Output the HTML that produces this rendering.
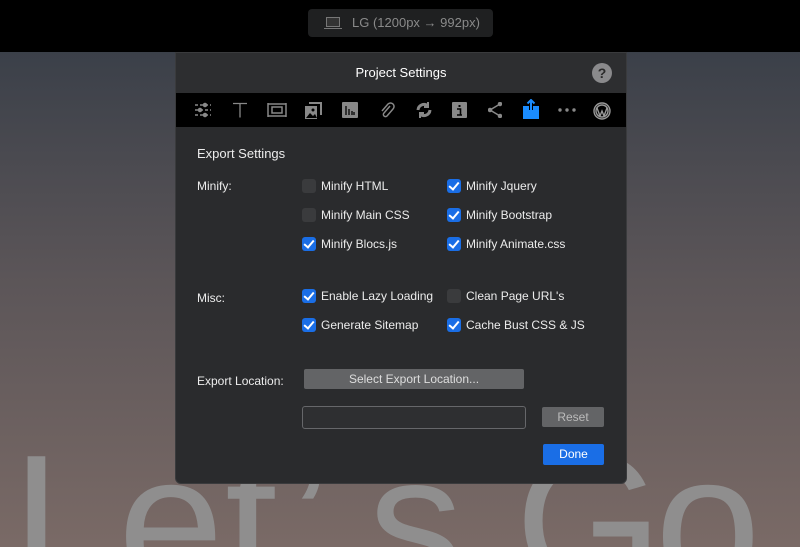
<!DOCTYPE html>
<html><head><meta charset="utf-8"><style>
*{margin:0;padding:0;box-sizing:border-box}
html,body{width:800px;height:547px;overflow:hidden}
body{background:#000;font-family:"Liberation Sans",sans-serif;position:relative}
#w{position:absolute;left:0;top:0;width:800px;height:547px;overflow:hidden}
.bg{position:absolute;left:0;top:52px;width:800px;height:495px;background:linear-gradient(#3b4049 0%,#5b5558 45%,#7a6a66 100%)}
.big{position:absolute;color:#8f8e8e;font-size:190px;line-height:1;top:427px;font-family:"Liberation Sans",sans-serif}
.pill{position:absolute;left:308px;top:9px;width:185px;height:28px;background:#1f2021;border-radius:4px;color:#8a8a8a;font-size:13px;line-height:28px}
.modal{position:absolute;left:175px;top:52px;width:452px;height:432px;background:#2a2b2d;border-radius:0 0 6px 6px;border:1px solid #3a3b3d;overflow:hidden}
.hdr{height:40px;background:#2d2e30;color:#fff;text-align:center;font-size:13px;line-height:40px;position:relative}
.help{position:absolute;right:14px;top:10px;width:20px;height:20px;border-radius:50%;background:#8a8a8c;color:#2a2a2a;font-size:14px;line-height:20px;text-align:center;font-weight:bold}
.tb{height:34px;background:#000;position:relative}
.tb svg{position:absolute;top:9px}
.ab{position:absolute;color:#ececec;font-size:12px}
.cb{position:absolute;width:14px;height:14px;border-radius:3px;background:#3a3b3d}
.cb.on{background:#1a6ee6}
.cb.on::after{content:"";position:absolute;left:4px;top:1px;width:4px;height:8px;border:solid #fff;border-width:0 2px 2px 0;transform:rotate(40deg)}
.btn{position:absolute;background:#636466;color:#ddd;font-size:12px;text-align:center;border-radius:2px}
</style></head><body><div id="w">
<div class="pill"><span style="position:absolute;left:18px;top:8px;width:14px;height:10px;border:1px solid #777;background:#333"></span><span style="position:absolute;left:16px;top:19px;width:18px;height:1px;background:#777"></span><span style="position:absolute;left:44px">LG (1200px → 992px)</span></div>
<div class="bg"></div>
<div class="big" style="left:12px">L</div>
<div class="big" style="left:118px">e</div>
<div class="big" style="left:225px">t</div>
<div class="big" style="left:290px">’</div>
<div class="big" style="left:368px">s</div>
<div class="big" style="left:515px">G</div>
<div class="big" style="left:655px">o</div>
<div class="modal">
<div class="hdr">Project Settings<div class="help">?</div></div>
<div class="tb">
<svg style="left:18px" width="18" height="16" viewBox="0 0 18 16" stroke="#888" stroke-width="1.5" fill="none"><path d="M1 3h16M1 8h16M1 13h16" stroke-dasharray="3 2"/><circle cx="11" cy="3" r="1.5" fill="#888"/><circle cx="6" cy="8" r="1.5" fill="#888"/><circle cx="11" cy="13" r="1.5" fill="#888"/></svg>
<svg style="left:56px" width="16" height="16" viewBox="0 0 16 16" stroke="#888" stroke-width="1.3" fill="none"><path d="M1 1.5h14M8 1.5v14"/></svg>
<svg style="left:91px" width="20" height="16" viewBox="0 0 20 16" stroke="#888" stroke-width="1.5" fill="none"><path d="M1 1v14M19 1v14M1 2h18M1 14h18"/><rect x="5" y="5" width="10" height="6"/></svg>
<svg style="left:129px" width="17" height="17" viewBox="0 0 17 17" fill="#888"><path d="M4 0h13v13h-2V2H4z"/><rect x="0" y="4" width="12" height="13"/><path d="M1 16l4-5 3 3 2-2 2 4z" fill="#000"/><circle cx="8" cy="8" r="1.5" fill="#000"/></svg>
<svg style="left:166px" width="16" height="16" viewBox="0 0 16 16"><rect width="16" height="16" rx="1" fill="#888"/><path d="M4 4v9M7 7v6M10 9v4M12 10v3" stroke="#000" stroke-width="1.3"/></svg>
<svg style="left:203px" width="16" height="16" viewBox="0 0 16 16" stroke="#888" stroke-width="1.5" fill="none"><path d="M11 4L5 11a2 2 0 003 3l6-7a3.5 3.5 0 00-5-5L3 9"/></svg>
<svg style="left:240px" width="16" height="16" viewBox="0 0 16 16" stroke="#888" stroke-width="3" fill="none"><path d="M2 8a6 6 0 0110-4M14 8a6 6 0 01-10 4"/><path d="M12 0v5H8M4 16v-5h4" stroke-width="2"/></svg>
<svg style="left:276px" width="15" height="16" viewBox="0 0 15 16"><rect width="15" height="16" rx="1" fill="#888"/><rect x="6.5" y="3" width="2" height="2" fill="#000"/><path d="M5 7h3.5v6H10M5 13h5" stroke="#000" stroke-width="1.6" fill="none"/></svg>
<svg style="left:312px" width="14" height="16" viewBox="0 0 14 16" stroke="#888" stroke-width="1.5" fill="#888"><path d="M12 2L2 8l10 6" fill="none"/><circle cx="12" cy="2" r="1.5"/><circle cx="2" cy="8" r="1.5"/><circle cx="12" cy="14" r="1.5"/></svg>
<svg style="left:347px;top:6px" width="16" height="20" viewBox="0 0 16 20"><path d="M0 7h6v4h4V7h6v13H0z" fill="#1a8cff"/><path d="M8 12V1M4.5 4.5L8 1l3.5 3.5" stroke="#1a8cff" stroke-width="2" fill="none"/></svg>
<svg style="left:382px" width="18" height="16" viewBox="0 0 18 16" fill="#888"><circle cx="2" cy="8" r="1.7"/><circle cx="9" cy="8" r="1.7"/><circle cx="16" cy="8" r="1.7"/></svg>
<svg style="left:417px" width="18" height="18" viewBox="0 0 18 18" fill="none" stroke="#999" stroke-width="1.4"><circle cx="9" cy="9" r="8"/><circle cx="9" cy="9" r="6"/><path d="M4 6l3 8 2-5 2 5 3-8"/></svg>
</div>
<div class="ab" style="left:21px;top:93px;font-size:13px">Export Settings</div>
<div class="ab" style="left:21px;top:126px">Minify:</div>
<div class="ab" style="left:21px;top:238px">Misc:</div>
<div class="ab" style="left:21px;top:321px">Export Location:</div>
<div class="cb" style="left:126px;top:126px"></div><div class="ab" style="left:145px;top:126px">Minify HTML</div>
<div class="cb" style="left:126px;top:155px"></div><div class="ab" style="left:145px;top:155px">Minify Main CSS</div>
<div class="cb on" style="left:126px;top:184px"></div><div class="ab" style="left:145px;top:184px">Minify Blocs.js</div>
<div class="cb on" style="left:271px;top:126px"></div><div class="ab" style="left:290px;top:126px">Minify Jquery</div>
<div class="cb on" style="left:271px;top:155px"></div><div class="ab" style="left:290px;top:155px">Minify Bootstrap</div>
<div class="cb on" style="left:271px;top:184px"></div><div class="ab" style="left:290px;top:184px">Minify Animate.css</div>
<div class="cb on" style="left:126px;top:236px"></div><div class="ab" style="left:145px;top:236px">Enable Lazy Loading</div>
<div class="cb on" style="left:126px;top:265px"></div><div class="ab" style="left:145px;top:265px">Generate Sitemap</div>
<div class="cb" style="left:271px;top:236px"></div><div class="ab" style="left:290px;top:236px">Clean Page URL's</div>
<div class="cb on" style="left:271px;top:265px"></div><div class="ab" style="left:290px;top:265px">Cache Bust CSS &amp; JS</div>
<div class="btn" style="left:128px;top:316px;width:220px;height:20px;line-height:20px">Select Export Location...</div>
<div style="position:absolute;left:126px;top:353px;width:224px;height:23px;border:1px solid #66676a;border-radius:3px;background:#2e2f31"></div>
<div class="btn" style="left:366px;top:354px;width:62px;height:20px;line-height:20px;color:#bbb">Reset</div>
<div class="btn" style="left:367px;top:391px;width:61px;height:21px;line-height:21px;background:#1a6ee6;color:#fff;font-size:12px">Done</div>
</div>
</div></body></html>
